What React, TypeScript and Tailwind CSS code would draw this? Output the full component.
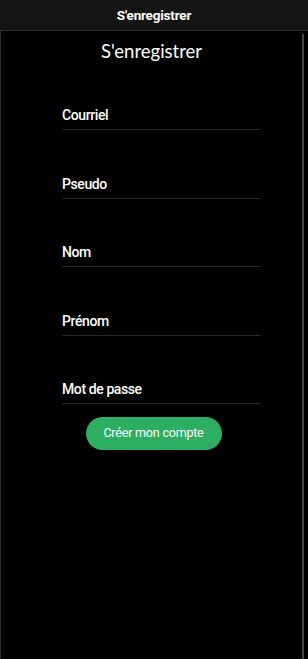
export default function App() {
  const fields = ['Courriel', 'Pseudo', 'Nom', 'Prénom', 'Mot de passe'];

  return (
    <div className="flex h-[659px] w-[308px] flex-col overflow-hidden bg-black" style={{ fontFamily: 'Roboto, "Liberation Sans", sans-serif' }}>
      <header className="flex h-[31px] shrink-0 items-center justify-center border-b border-[#2b2b2b] bg-[#141414]">
        <span className="text-[13.5px] font-bold tracking-[-0.2px] text-white">S'enregistrer</span>
      </header>

      <div className="flex flex-1 border-l border-[#2a2a2a]">
        <main className="flex flex-1 flex-col">
          <h1 className="mt-[8px] text-center text-[18.5px] leading-[24px] text-white" style={{ fontFamily: 'Lato, "Open Sans", sans-serif' }}>
            S'enregistrer
          </h1>

          <form className="ml-[61px] mt-[42px] flex w-[199px] flex-col gap-[43.5px]">
            {fields.map((label) => (
              <div key={label} className="border-b border-[#262626] pb-[4px]">
                <label className="block text-[14px] font-medium leading-[20px] tracking-[-0.4px] text-white">{label}</label>
              </div>
            ))}
          </form>

          <div className="mt-[13px] flex justify-center pl-[4px]">
            <button className="h-[33px] w-[136px] rounded-full bg-[#2caf62] text-[12.5px] text-white tracking-[-0.2px]">
              Créer mon compte
            </button>
          </div>
        </main>
        <div className="mr-[4px] mt-[3px] w-[2px] bg-[#454545]" />
      </div>
    </div>
  );
}
